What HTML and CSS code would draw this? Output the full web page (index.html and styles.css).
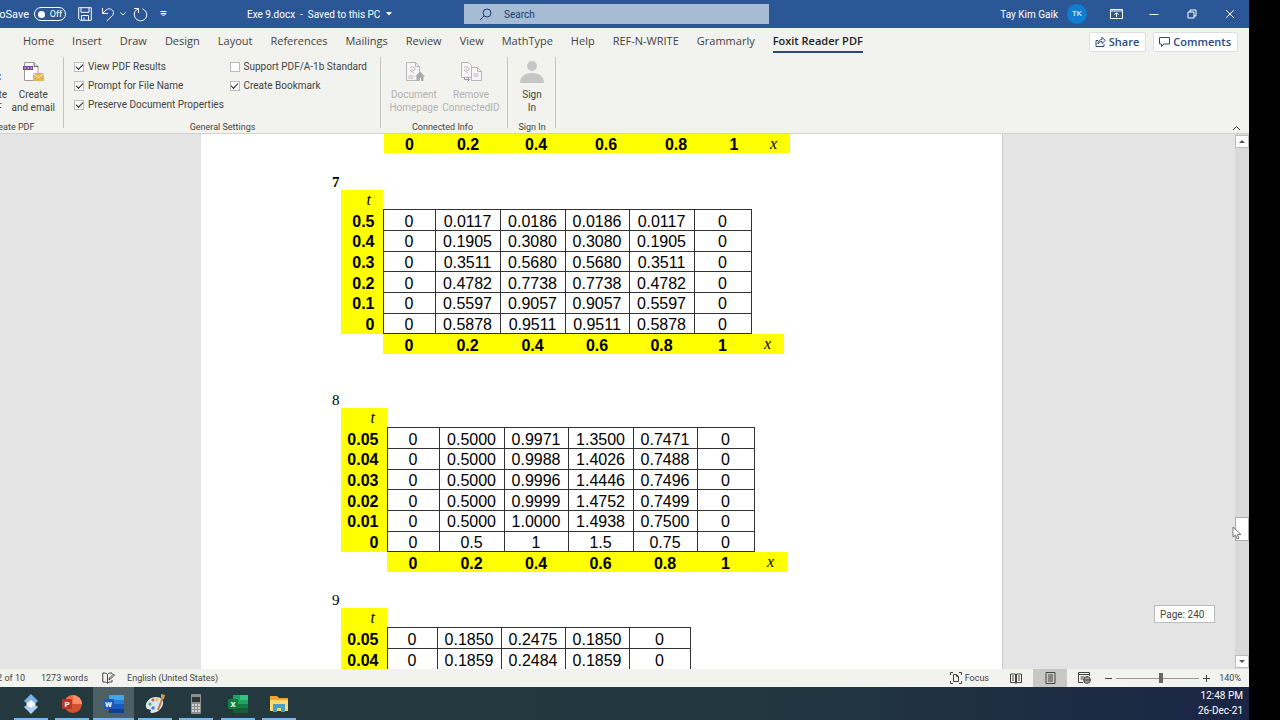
FILE: index.html
```html
<!DOCTYPE html>
<html lang="en">
<head>
  <meta charset="UTF-8">
  <title>Exe 9.docx - Word</title>
  <link rel="stylesheet" href="styles.css">
</head>
<body>

<div class="screen">
  <header class="titlebar">
    <span class="autosave">AutoSave</span>
    <button class="toggle" aria-label="AutoSave off"><i></i>Off</button>
    <div class="quick">
      <button class="save" aria-label="Save"><svg width="14" height="14" viewBox="0 0 14 14"><path d="M.7.7h12.6v12.6H2.5L.7 11.5zM3 .7v4.6h8V.7M3.500 13.300V8.500h7v4.800M6 13v-2.500"/></svg></button>
      <button class="undo" aria-label="Undo"><svg width="15" height="15" viewBox="0 0 15 15"><path d="M1.500 1v5.500H7M1.700 6.200L5.500 2.700C8 1 11.500 2 12.300 4.500c.6 2-.2 3.500-1.500 4.700L5.800 14"/></svg></button>
      <button class="drop" aria-label="Undo list"><svg width="6" height="4" viewBox="0 0 6 4"><path d="M.5.5L3 3 5.500.5"/></svg></button>
      <button class="redo" aria-label="Repeat"><svg width="15" height="15" viewBox="0 0 15 15"><path d="M1 1.500h4.500V6M5.300 1.700C2.500 3 1 5.300 1.300 8c.4 3.500 3 5.800 6.200 5.800 3.500 0 6.200-2.600 6.200-6 0-2.800-1.700-5-4.200-5.900"/></svg></button>
      <button class="more" aria-label="Customize toolbar"><svg width="7" height="6" viewBox="0 0 7 6"><path d="M.5.5h6M1 2.500h5L3.500 5z"/></svg></button>
    </div>
    <button class="filename">Exe 9.docx&nbsp; -&nbsp; Saved to this PC <svg width="6" height="4" viewBox="0 0 6 4"><path d="M0 0h6L3 3.500z"/></svg></button>
    <label class="search">
      <svg width="13" height="13" viewBox="0 0 13 13"><circle cx="8" cy="5" r="4"/><path d="M5 8L1 12"/></svg>
      <input type="text" placeholder="Search" aria-label="Search">
    </label>
    <div class="account">
      <span>Tay Kim Gaik</span>
      <span class="avatar">TK</span>
    </div>
    <div class="controls">
      <button aria-label="Ribbon display options"><svg width="13" height="10" viewBox="0 0 13 10"><path d="M.5.500h12v9H.5zM.5 2h12M6.500 8V4M4.500 5.700l2-2 2 2"/></svg></button>
      <button aria-label="Minimize"><svg width="10" height="10" viewBox="0 0 10 10"><path d="M.5 5.500h9"/></svg></button>
      <button aria-label="Restore"><svg width="10" height="10" viewBox="0 0 10 10"><path d="M1 3h6v6H1zM3 3V1h6v6H7"/></svg></button>
      <button aria-label="Close"><svg width="10" height="10" viewBox="0 0 10 10"><path d="M1 1l8 8M9 1L1 9"/></svg></button>
    </div>
  </header>

  <nav class="tabs">
    <a href="#">Home</a>
    <a href="#">Insert</a>
    <a href="#">Draw</a>
    <a href="#">Design</a>
    <a href="#">Layout</a>
    <a href="#">References</a>
    <a href="#">Mailings</a>
    <a href="#">Review</a>
    <a href="#">View</a>
    <a href="#">MathType</a>
    <a href="#">Help</a>
    <a href="#">REF-N-WRITE</a>
    <a href="#">Grammarly</a>
    <a href="#" class="active">Foxit Reader PDF</a>
    <div class="share">
      <button><svg width="11" height="11" viewBox="0 0 11 11"><path d="M3 4.500H1v6h8V8M3 8c.2-3 1.800-4.500 4-4.500V1.200L10.300 4.500 7 7.500V5.500C5.200 5.500 4 6.300 3 8z"/></svg>Share</button>
      <button><svg width="11" height="10" viewBox="0 0 11 10"><path d="M.5.500h10v6.500H5L2.500 9.500V7h-2z"/></svg>Comments</button>
    </div>
  </nav>

  <section class="ribbon">
    <div class="group create">
      <div class="tools">
        <button class="tool"><svg width="22" height="22" viewBox="0 0 22 22"><path fill="#fff" stroke="#888" d="M3.500 1.500h9l4 4v15h-13z"/><path fill="#5b9bd5" d="M12 13h7v2h-7zM12 17h7v2h-7z"/></svg>Create<br>PDF</button>
        <button class="tool"><svg width="22" height="22" viewBox="0 0 22 22"><path fill="#fff" stroke="#999" d="M2.500 1.500h9.500l4 4v14h-13.500z"/><path fill="#ddd" stroke="#666" d="M12 1.500v4h4"/><path fill="#7b4a8e" d="M1 5h10v4H1z"/><path stroke="#fff" d="M2.500 7h1.500M5.500 7H7M8.500 7H10"/><path fill="#e5b25c" d="M11 12h11v8H11z"/><path fill="none" stroke="#fff3d8" d="M11 12.500l5.500 4 5.500-4"/></svg>Create<br>and email</button>
      </div>
      <span class="caption">Create PDF</span>
    </div>
    <div class="group settings">
      <div class="options">
        <div>
          <label><input type="checkbox" checked>View PDF Results</label>
          <label><input type="checkbox" checked>Prompt for File Name</label>
          <label><input type="checkbox" checked>Preserve Document Properties</label>
        </div>
        <div>
          <label><input type="checkbox">Support PDF/A-1b Standard</label>
          <label><input type="checkbox" checked>Create Bookmark</label>
        </div>
      </div>
      <span class="caption">General Settings</span>
    </div>
    <div class="group connected">
      <div class="tools">
        <button class="tool" disabled><svg width="22" height="22" viewBox="0 0 22 22"><path fill="#f8f5f8" stroke="#b8b4b8" d="M3.500 1.500h9l4 4v14h-13z"/><path fill="none" stroke="#b8b4b8" d="M12.500 1.500v4h4M7 7c2-2 5-1 5 1s-3 2-3 0M7 9l4 3M5.500 15h5M5.500 17h5"/><path fill="#aaa" d="M17 10.500l5 5h-1.500V20h-2.500v-3h-2v3h-2.500v-4.500H12z"/></svg>Document<br>Homepage</button>
        <button class="tool" disabled><svg width="22" height="22" viewBox="0 0 22 22"><path fill="#f8f5f8" stroke="#b8b4b8" d="M1.500 1.500h7l3 3v12h-10z"/><path fill="none" stroke="#b8b4b8" d="M4 7c2-2 5-1 5 1s-3 2-3 0M4 9l4 3"/><path fill="#f8f5f8" stroke="#b8b4b8" d="M11.500 6.500h6l4 4v9h-10z"/><path fill="none" stroke="#b8b4b8" d="M17.500 6.500v4h4M13.500 13h5M13.500 15h5"/><path fill="none" stroke="#999" d="M4.500 16v2.500h5M7.500 16.500l2 2-2 2"/></svg>Remove<br>ConnectedID</button>
      </div>
      <span class="caption">Connected Info</span>
    </div>
    <div class="group signin">
      <div class="tools">
        <button class="tool"><svg width="24" height="22" viewBox="0 0 24 22"><circle cx="12" cy="5" r="5" fill="#c6c6c6"/><path fill="#c6c6c6" d="M0 22c0-6 4-10 12-10s12 4 12 10z"/></svg>Sign<br>In</button>
      </div>
      <span class="caption">Sign In</span>
    </div>
    <button class="collapse" aria-label="Collapse the ribbon"><svg width="9" height="6" viewBox="0 0 9 6"><path d="M1 5l3.500-3.500L8 5"/></svg></button>
  </section>

  <main class="workspace">
    <div class="canvas">
      <article class="page">
        <table class="grid grid-six">
          <tr class="axis"><th>0</th><th>0.2</th><th>0.4</th><th>0.6</th><th>0.8</th><th>1</th><th class="var">x</th></tr>
        </table>

        <section class="exercise">
          <h2 class="bold">7</h2>
          <table class="grid full">
            <colgroup><col class="c42"><col class="c52"><col class="c65"><col class="c65"><col class="c64"><col class="c65"><col class="c57"><col class="c33"></colgroup>
            <tr><th class="var">t</th></tr>
            <tr><th>0.5</th><td>0</td><td>0.0117</td><td>0.0186</td><td>0.0186</td><td>0.0117</td><td>0</td></tr>
            <tr><th>0.4</th><td>0</td><td>0.1905</td><td>0.3080</td><td>0.3080</td><td>0.1905</td><td>0</td></tr>
            <tr><th>0.3</th><td>0</td><td>0.3511</td><td>0.5680</td><td>0.5680</td><td>0.3511</td><td>0</td></tr>
            <tr><th>0.2</th><td>0</td><td>0.4782</td><td>0.7738</td><td>0.7738</td><td>0.4782</td><td>0</td></tr>
            <tr><th>0.1</th><td>0</td><td>0.5597</td><td>0.9057</td><td>0.9057</td><td>0.5597</td><td>0</td></tr>
            <tr><th>0</th><td>0</td><td>0.5878</td><td>0.9511</td><td>0.9511</td><td>0.5878</td><td>0</td></tr>
            <tr class="axis"><td class="blank"></td><th>0</th><th>0.2</th><th>0.4</th><th>0.6</th><th>0.8</th><th>1</th><th class="var">x</th></tr>
          </table>
        </section>

        <section class="exercise spaced">
          <h2>8</h2>
          <table class="grid full">
            <colgroup><col class="c46"><col class="c52"><col class="c65"><col class="c64"><col class="c65"><col class="c64"><col class="c57"><col class="c33"></colgroup>
            <tr><th class="var">t</th></tr>
            <tr><th>0.05</th><td>0</td><td>0.5000</td><td>0.9971</td><td>1.3500</td><td>0.7471</td><td>0</td></tr>
            <tr><th>0.04</th><td>0</td><td>0.5000</td><td>0.9988</td><td>1.4026</td><td>0.7488</td><td>0</td></tr>
            <tr><th>0.03</th><td>0</td><td>0.5000</td><td>0.9996</td><td>1.4446</td><td>0.7496</td><td>0</td></tr>
            <tr><th>0.02</th><td>0</td><td>0.5000</td><td>0.9999</td><td>1.4752</td><td>0.7499</td><td>0</td></tr>
            <tr><th>0.01</th><td>0</td><td>0.5000</td><td>1.0000</td><td>1.4938</td><td>0.7500</td><td>0</td></tr>
            <tr><th>0</th><td>0</td><td>0.5</td><td>1</td><td>1.5</td><td>0.75</td><td>0</td></tr>
            <tr class="axis"><td class="blank"></td><th>0</th><th>0.2</th><th>0.4</th><th>0.6</th><th>0.8</th><th>1</th><th class="var">x</th></tr>
          </table>
        </section>

        <section class="exercise">
          <h2>9</h2>
          <table class="grid short">
            <colgroup><col class="c46"><col class="c50"><col class="c64"><col class="c64"><col class="c64"><col class="c61"></colgroup>
            <tr><th class="var">t</th></tr>
            <tr><th>0.05</th><td>0</td><td>0.1850</td><td>0.2475</td><td>0.1850</td><td>0</td></tr>
            <tr><th>0.04</th><td>0</td><td>0.1859</td><td>0.2484</td><td>0.1859</td><td>0</td></tr>
          </table>
        </section>
      </article>
      <div class="page-tip">Page: 240</div>
    </div>
    <div class="scrollbar">
      <button aria-label="Scroll up"><svg width="8" height="5" viewBox="0 0 8 5"><path d="M1 4h6L4 1z"/></svg></button>
      <div class="track"><div class="thumb"></div></div>
      <button aria-label="Scroll down"><svg width="8" height="5" viewBox="0 0 8 5"><path d="M1 1h6L4 4z"/></svg></button>
      <svg class="cursor" width="10" height="14" viewBox="0 0 10 14"><path d="M1 1v10l2.500-2 1.700 4 1.800-.8-1.700-3.700H9z"/></svg>
    </div>
  </main>

  <footer class="status">
    <span class="pages">Page 2 of 10</span>
    <span class="words">1273 words</span>
    <svg class="proof" width="13" height="12" viewBox="0 0 13 12"><path d="M5.500 2.500C4.500 1 2.500 1 .8 1v9c1.700 0 3.700 0 4.700 1.200zM5.500 2.500C6.500 1 8 1 10 1v1M5.500 11.200c1-1.200 2-1.200 4.500-1.200V8M7 8l.5-2L11.500 2l1 1-4 4z"/></svg>
    <span>English (United States)</span>
    <button class="focus"><svg width="12" height="12" viewBox="0 0 12 12"><path d="M3 .5H.5V3M9 .5h2.500V3M.5 9v2.500H3M11.500 9v2.500H9M3.500 2.500h3l2 2v5h-5zM6.500 2.500v2h2"/></svg>Focus</button>
    <div class="views">
      <button aria-label="Read mode"><svg width="12" height="11" viewBox="0 0 12 11"><path d="M.5 1h5v8.500h-5zM6.500 1h5v8.500h-5zM6 1v10M2 3h2M2 5h2M2 7h2M8 3h2M8 5h2M8 7h2"/></svg></button>
      <button class="current" aria-label="Print layout"><svg width="11" height="12" viewBox="0 0 11 12"><path d="M1 .5h9v11H1zM3 3h5M3 5h5M3 7h5M3 9h5"/></svg></button>
      <button aria-label="Web layout"><svg width="13" height="12" viewBox="0 0 13 12"><path d="M5 10.500H.5V.5h11V4M.5 2.500h11M2.500 5h4M2.500 7h3"/><circle cx="9" cy="8" r="3.400"/><path d="M5.600 8h6.800M9 4.600v6.800M7 5.500v5M11 5.500v5"/></svg></button>
    </div>
    <div class="zoom">
      <button aria-label="Zoom out"><svg width="7" height="7" viewBox="0 0 7 7"><path d="M0 3.500h7"/></svg></button>
      <input type="range" min="10" max="190" value="108" aria-label="Zoom">
      <button aria-label="Zoom in"><svg width="7" height="7" viewBox="0 0 7 7"><path d="M0 3.500h7M3.500 0v7"/></svg></button>
      <span>140%</span>
    </div>
  </footer>

  <div class="taskbar">
    <div class="apps">
      <button aria-label="File sync"><svg width="20" height="20" viewBox="0 0 20 20"><path fill="#7fb2ea" d="M10 0l7 7-7 6-7-6z"/><path fill="#a9cff5" d="M10 8l7 5-7 7-7-7z"/><path fill="#fff" d="M10 6l5 4-5 4-5-4z"/></svg></button>
      <button aria-label="PowerPoint"><svg width="20" height="20" viewBox="0 0 20 20"><circle cx="11" cy="10" r="9" fill="#d35230"/><path fill="#ff8f6b" d="M11 1a9 9 0 0 1 9 9h-9z"/><path fill="#ed6c47" d="M2 10a9 9 0 0 1 9-9v9z"/><rect y="5" width="10" height="10" rx="1" fill="#b7362a"/><text x="2.500" y="13">P</text></svg></button>
      <button class="open" aria-label="Word"><svg width="20" height="20" viewBox="0 0 20 20"><path fill="#41a5ee" d="M5 1h15v5H5z"/><path fill="#2b7cd3" d="M5 6h15v4H5z"/><path fill="#185abd" d="M5 10h15v5H5z"/><path fill="#103f91" d="M5 15h15v4H5z"/><rect y="5" width="10" height="10" rx="1" fill="#185abd"/><text x="1" y="13">W</text></svg></button>
      <button aria-label="Paint"><svg width="20" height="20" viewBox="0 0 20 20"><path fill="#d9e6ef" d="M1 13C0 8 5 3 11 3c5 0 8 3 7 7-1 5-6 9-11 9-2 0-2-2-1-3s-4 1-5-3z"/><circle cx="5" cy="10" r="1.500" fill="#4caf50"/><circle cx="8" cy="6" r="1.500" fill="#e2574c"/><circle cx="12" cy="5.500" r="1.500" fill="#f3c13a"/><circle cx="8" cy="14" r="1.700" fill="#3f83c8"/><path stroke="#c47a3d" stroke-width="2" d="M18 3l-5 13"/><path fill="#d79a55" d="M16 0l4 1-1 4-3-1z"/></svg></button>
      <button aria-label="Calculator"><svg width="20" height="20" viewBox="0 0 20 20"><rect x="5" y="0" width="10" height="20" rx="1" fill="#8b8f91"/><path fill="#333" d="M6 3h8v5H6z"/><path stroke="#e8e8e8" stroke-width="1.500" stroke-dasharray="2 1" d="M6 11h8M6 14h8M6 17h8"/></svg></button>
      <button aria-label="Excel"><svg width="20" height="20" viewBox="0 0 20 20"><path fill="#21a366" d="M5 1h8v9H5z"/><path fill="#33c481" d="M12 1h8v5h-8z"/><path fill="#107c41" d="M5 10h15v4H5z"/><path fill="#21a366" d="M12 6h8v4h-8z"/><path fill="#185c37" d="M5 14h15v5H5z"/><rect y="5" width="10" height="10" rx="1" fill="#107c41"/><text x="2.500" y="13">X</text></svg></button>
      <button aria-label="File Explorer"><svg width="20" height="20" viewBox="0 0 20 20"><path fill="#e8a92e" d="M1 2h7l2 2h9v5H1z"/><path fill="#ffd869" d="M1 6h18v11H1z"/><path fill="#4a9bd0" d="M4 10h12v8h-4v-4H8v4H4z"/></svg></button>
    </div>
    <div class="clock"><span>12:48 PM</span><span>26-Dec-21</span></div>
  </div>
</div>

</body>
</html>
```
FILE: styles.css
```css
* {
  box-sizing: border-box;
}

body {
  margin: 0;
  padding-right: 31px;
  background: #000;
  color: #444;
  font-family: Roboto, "Noto Sans", sans-serif;
  font-size: 10px;
  overflow: hidden;
}

button {
  display: flex;
  align-items: center;
  justify-content: center;
  padding: 0;
  border: none;
  background: none;
  color: inherit;
  font: inherit;
}

svg {
  flex-shrink: 0;
}

.screen {
  display: flex;
  flex-direction: column;
  height: 100vh;
}

/* title bar */
.titlebar {
  display: flex;
  align-items: center;
  height: 28px;
  background: #2b5797;
  color: #fff;
  font-size: 11px;
  white-space: nowrap;
}

.titlebar svg {
  fill: none;
  stroke: #fff;
}

.autosave {
  display: flex;
  justify-content: flex-end;
  width: 29px;
}

.toggle {
  gap: 5px;
  width: 32px;
  height: 14px;
  margin-left: 5px;
  border: 1px solid #fff;
  border-radius: 7px;
  font-size: 9px;
}

.toggle i {
  width: 7px;
  height: 7px;
  border-radius: 50%;
  background: #fff;
}

.quick {
  display: flex;
  align-items: center;
  margin-left: 12px;
}

.undo {
  margin-left: 9px;
}

.drop {
  margin-left: 4px;
}

.redo {
  margin-left: 7px;
}

.more {
  margin-left: 12px;
}

.filename {
  gap: 6px;
  margin-left: 80px;
  font-size: 10px;
}

.titlebar .filename svg {
  fill: #fff;
  stroke: none;
}

.search {
  display: flex;
  align-items: center;
  gap: 12px;
  width: 305px;
  height: 20px;
  margin-left: auto;
  padding-left: 15px;
  background: #a6bbd4;
  font-size: 10px;
}

.search svg {
  stroke: #1e3f70;
}

.search input {
  flex: 1;
  min-width: 0;
  padding: 0;
  border: none;
  background: none;
  font: inherit;
}

.search input::placeholder {
  color: #1e3f70;
  opacity: 1;
}

.account {
  display: flex;
  align-items: center;
  justify-content: flex-end;
  gap: 9px;
  width: 318px;
  font-size: 10px;
}

.avatar {
  width: 20px;
  height: 20px;
  border-radius: 50%;
  background: #0f7dd0;
  font-size: 8px;
  line-height: 20px;
  text-align: center;
}

.controls {
  display: flex;
  margin-left: 10px;
}

.controls button {
  width: 38px;
  height: 28px;
}

/* tabs */
.tabs {
  display: flex;
  align-items: center;
  gap: 18px;
  height: 27px;
  padding: 0 11px 0 23px;
  background: #f2f3ee;
  font-family: "Open Sans", "Noto Sans", sans-serif;
  font-size: 11px;
  white-space: nowrap;
}

.tabs a {
  height: 23px;
  color: #444;
  line-height: 22px;
  text-decoration: none;
}

.tabs .active {
  border-bottom: 2px solid #2b4a7c;
  color: #222;
  font-weight: 600;
}

.share {
  display: flex;
  gap: 7px;
  margin-left: auto;
}

.share button {
  gap: 3px;
  height: 20px;
  padding: 0 6px 0 5px;
  border: 1px solid #e1dfdd;
  border-radius: 2px;
  background: #fff;
  color: #2b4a7c;
  font-weight: 600;
}

.share svg {
  fill: none;
  stroke: #2b4a7c;
}

/* ribbon */
.ribbon {
  display: flex;
  height: 79px;
  padding: 1px 8px 0 0;
  border-bottom: 1px solid #d2d2d0;
  background: #f2f3ee;
  white-space: nowrap;
}

.group {
  display: flex;
  flex-direction: column;
  justify-content: space-between;
  height: 77px;
  background: linear-gradient(#c3c3c0, #c3c3c0) right 1px / 1px 71px no-repeat;
}

.create {
  width: 104px;
  margin-left: -40px;
}

.settings {
  width: 317px;
}

.connected {
  width: 127px;
  padding-right: 4px;
}

.signin {
  width: 48px;
}

.tools {
  display: flex;
  justify-content: center;
}

.create .tools {
  justify-content: flex-end;
  padding-right: 9px;
}

.tool {
  flex-direction: column;
  justify-content: flex-start;
  min-width: 38px;
  padding-top: 5px;
  line-height: 13px;
}

.tool svg {
  margin-bottom: 5px;
}

.tool:disabled {
  min-width: 57px;
  color: #b3b1b0;
}

.caption {
  font-size: 9px;
  line-height: 12px;
  text-align: center;
}

.options {
  display: flex;
  justify-content: space-between;
  padding: 1px 14px 0 10px;
}

.options label {
  display: flex;
  align-items: center;
  gap: 4px;
  height: 19px;
}

.options input {
  display: grid;
  place-items: center;
  width: 10px;
  height: 10px;
  margin: 0;
  border: 1px solid #bbb;
  background: #fff;
  appearance: none;
}

.options input:checked::after {
  content: "";
  width: 6px;
  height: 3px;
  margin-bottom: 2px;
  border-bottom: 1px solid #222;
  border-left: 1px solid #222;
  transform: rotate(-45deg);
}

.collapse {
  align-self: flex-end;
  margin: 0 0 2px auto;
}

.collapse svg {
  fill: none;
  stroke: #333;
}

/* document */
.workspace {
  display: flex;
  flex: 1;
  min-height: 0;
  background: #e4e4e4;
}

.canvas {
  position: relative;
  display: flex;
  flex: 1;
  justify-content: center;
  padding-right: 31px;
  overflow: hidden;
}

.page {
  width: 802px;
  padding-left: 131px;
  border-right: 1px solid #c8c8c8;
  background: #fff;
  color: #000;
}

.exercise {
  margin-bottom: 18px;
}

.exercise h2 {
  height: 18px;
  margin: 0;
  font-family: "Liberation Serif", serif;
  font-size: 15px;
  font-weight: normal;
  line-height: 20px;
}

.exercise .bold {
  font-weight: bold;
}

.spaced {
  margin-top: 36px;
}

.grid {
  margin-left: 9px;
  border-collapse: collapse;
  table-layout: fixed;
  width: 0;
  font-family: "Liberation Sans", Arial, sans-serif;
  font-size: 16px;
  line-height: 17px;
  text-align: center;
}

.full {
  height: 164px;
}

.short {
  height: 62px;
}

.grid-six {
  width: 406px;
  margin: 0 0 19px 52px;
}

.grid-six th:nth-child(1) { width: 51px; }
.grid-six th:nth-child(2) { width: 66px; }
.grid-six th:nth-child(6) { width: 46px; }
.grid-six th:nth-child(7) { width: 33px; }

.c33 { width: 33px; }
.c42 { width: 42px; }
.c46 { width: 46px; }
.c50 { width: 50px; }
.c52 { width: 52px; }
.c57 { width: 57px; }
.c61 { width: 61px; }
.c64 { width: 64px; }
.c65 { width: 65px; }

.grid th,
.grid td {
  height: 19px;
  padding: 2px 0 0;
}

.grid td {
  border: 1px solid #333;
}

.grid th {
  padding-right: 8px;
  background: #ff0;
  text-align: right;
}

.grid .axis th {
  padding-right: 0;
  text-align: center;
}

.grid .blank {
  border: none;
}

.grid .var {
  padding: 0 12px 0 0;
  font-family: "Liberation Serif", serif;
  font-style: italic;
  font-weight: normal;
}

.page-tip {
  position: absolute;
  right: 20px;
  bottom: 46px;
  width: 61px;
  height: 18px;
  padding-left: 5px;
  border: 1px solid #bbb;
  background: #fff;
  line-height: 17px;
}

.scrollbar {
  position: relative;
  display: flex;
  flex-direction: column;
  width: 14px;
  padding: 1px 0;
  background: #dadada;
}

.scrollbar button {
  height: 13px;
  border: 1px solid #bbb;
  background: #fff;
}

.scrollbar button svg {
  fill: #555;
}

.track {
  display: flex;
  flex: 1;
  flex-direction: column;
}

.thumb {
  height: 24px;
  margin-top: 369px;
  border: 1px solid #aaa;
  background: #fff;
}

.cursor {
  position: absolute;
  top: 392px;
  left: -3px;
  fill: #fff;
  stroke: #777;
}

/* status bar */
.status {
  display: flex;
  align-items: center;
  height: 18px;
  background: #f2f3ee;
  font-size: 9px;
  white-space: nowrap;
}

.status svg {
  fill: none;
  stroke: #444;
}

.pages {
  display: flex;
  justify-content: flex-end;
  width: 25px;
}

.words {
  margin-left: 16px;
}

.proof {
  margin: 0 12px 0 14px;
}

.focus {
  gap: 3px;
  margin-left: auto;
}

.views {
  display: flex;
  margin-left: 10px;
}

.views button {
  width: 34px;
  height: 18px;
}

.views .current {
  background: #c8c8c6;
}

.zoom {
  display: flex;
  align-items: center;
  margin: 0 8px 0 4px;
}

.zoom input {
  width: 83px;
  height: 10px;
  margin: 0 4px;
  background: linear-gradient(#999, #999) center / 100% 1px no-repeat;
  appearance: none;
}

.zoom input::-webkit-slider-thumb {
  width: 4px;
  height: 10px;
  background: #666;
  appearance: none;
}

.zoom span {
  width: 31px;
  text-align: right;
}

/* taskbar */
.taskbar {
  display: flex;
  justify-content: space-between;
  height: 33px;
  background: linear-gradient(90deg, #24393e, #223840 60%, #1a2545);
  color: #fff;
}

.apps {
  display: grid;
  grid-template-columns: repeat(7, 1fr);
  width: 290px;
  margin-left: 10px;
}

.apps button {
  background: linear-gradient(#76b9ed, #76b9ed) center bottom / 34px 2px no-repeat;
}

.apps .open {
  background: linear-gradient(#76b9ed, #76b9ed) center bottom / 100% 2px no-repeat #4b5f65;
}

.apps text {
  fill: #fff;
  font-size: 8px;
  font-weight: bold;
}

.clock {
  display: flex;
  flex-direction: column;
  align-items: flex-end;
  padding: 1px 6px 0 0;
  line-height: 15px;
}
```
